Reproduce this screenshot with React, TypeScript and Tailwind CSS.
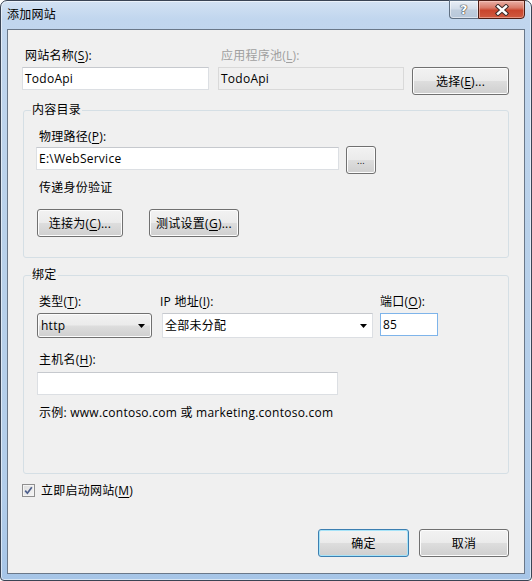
import React from 'react';

const ui = "font-['Open_Sans','Noto_Sans_CJK_SC',sans-serif] text-[12px] leading-[15px] tracking-[0.25px] text-black";

const Mn: React.FC<{ k: string }> = ({ k }) => <u className="underline underline-offset-[2px]">{k}</u>;

interface BtnProps {
    children: React.ReactNode;
    className?: string;
    primary?: boolean;
}

const WinButton: React.FC<BtnProps> = ({ children, className = '', primary = false }) => (
    <button
        className={`h-[28px] shrink-0 rounded-[3px] border ${primary ? 'border-[#3c7fb1] shadow-[inset_0_0_0_1px_#a6e3f8]' : 'border-[#707070] shadow-[inset_0_0_0_1px_#fcfcfc]'} bg-[linear-gradient(180deg,#f2f2f2_0%,#ebebeb_48%,#dddddd_52%,#cfcfcf_100%)] text-center ${className}`}
    >
        {children}
    </button>
);

const TextBox: React.FC<{ value?: string; className?: string; disabled?: boolean; focused?: boolean }> = ({
    value = '',
    className = '',
    disabled = false,
    focused = false,
}) => (
    <div
        className={`flex h-[23px] shrink-0 items-center border px-[2px] ${
            focused
                ? 'border-[#7eb4ea] bg-white'
                : disabled
                  ? 'border-[#d9d9d9] bg-[#f0f0f0]'
                  : 'border-[#dcdfe3] border-t-[#c6c9ce] bg-white'
        } ${className}`}
    >
        {value}
    </div>
);

const Arrow = () => (
    <svg width="7" height="4" viewBox="0 0 7 4" className="shrink-0">
        <path d="M0 0h7L3.5 4z" fill="#000" />
    </svg>
);

export default function App() {
    return (
        <div className={`${ui} flex h-[581px] w-[532px] flex-col rounded-t-[7px] rounded-b-[4px] border border-[#3a4454] bg-[linear-gradient(180deg,#d3e2f3_0%,#c1d6ee_18px,#b9d1ea_40%,#b2cdea_85%,#a6c5e7_100%)] px-[6px] pb-[6px] shadow-[inset_0_0_0_1px_rgba(255,255,255,0.55)]`}>
            {/* title bar */}
            <div className="flex h-[28px] shrink-0 items-start">
                <div className="pt-[6px] text-black">添加网站</div>
                <div className="-mt-px ml-auto flex h-[19px]">
                    <div className="flex w-[29px] items-center justify-center rounded-bl-[4px] border border-r-0 border-[#5f6f82] bg-[linear-gradient(180deg,#e9eff6_0%,#d3dde9_45%,#bfcddd_55%,#b7c7da_100%)] shadow-[inset_0_0_0_1px_rgba(255,255,255,0.5)]">
                        <span className="font-['DejaVu_Sans',sans-serif] text-[13px] font-bold leading-none text-white [text-shadow:0_0_1px_#333,0_0_1px_#333,0_0_1px_#333]">?</span>
                    </div>
                    <div className="flex w-[47px] items-center justify-center rounded-br-[4px] border border-[#4e1d14] bg-[linear-gradient(180deg,#eab0a6_0%,#d87a68_40%,#c9452d_55%,#cf5a40_100%)] shadow-[inset_0_0_0_1px_rgba(255,220,210,0.45)]">
                        <svg width="14" height="12" viewBox="0 0 14 12">
                            <path d="M3 2.5l8 7M11 2.5l-8 7" stroke="#3b2a28" strokeWidth="4.4" strokeLinecap="square" />
                            <path d="M3 2.5l8 7M11 2.5l-8 7" stroke="#fff" strokeWidth="2.4" strokeLinecap="square" />
                        </svg>
                    </div>
                </div>
            </div>

            {/* client area */}
            <div className="flex flex-1 flex-col border border-[#6a7889] bg-[#f0f0f0]">
                {/* site name row */}
                <div className="flex pl-[14px] pr-[15px] pt-[18px]">
                    <div className="flex w-[187px] flex-col">
                        <div className="ml-[3px] h-[19px]">
                            网站名称(<Mn k="S" />):
                        </div>
                        <TextBox value="TodoApi" />
                    </div>
                    <div className="ml-[9px] flex w-[186px] flex-col">
                        <div className="ml-[3px] h-[19px] text-[#a0a0a0]">
                            应用程序池(<Mn k="L" />):
                        </div>
                        <TextBox value="TodoApi" disabled />
                    </div>
                    <div className="ml-auto flex flex-col pt-[19px]">
                        <WinButton className="w-[97px]">
                            选择(<Mn k="E" />)...
                        </WinButton>
                    </div>
                </div>

                {/* content directory */}
                <fieldset className="mx-[15px] mt-[8px] rounded-[3px] border border-[#d5dfe5] p-0">
                    <legend className="ml-[7px] px-[1px] leading-[14px]">内容目录</legend>
                    <div className="flex flex-col pb-[20px] pl-[12px] pt-[12px]">
                        <div className="ml-[3px]">
                            物理路径(<Mn k="P" />):
                        </div>
                        <div className="mt-[2px] flex items-start">
                            <TextBox value="E:\WebService" className="mt-px w-[303px]" />
                            <WinButton className="ml-[7px] w-[30px] text-[9px]">...</WinButton>
                        </div>
                        <div className="ml-[3px] mt-[6px]">传递身份验证</div>
                        <div className="mt-[14px] flex">
                            <WinButton className="ml-px w-[86px]">
                                连接为(<Mn k="C" />)...
                            </WinButton>
                            <WinButton className="ml-[26px] w-[90px]">
                                测试设置(<Mn k="G" />)...
                            </WinButton>
                        </div>
                    </div>
                </fieldset>

                {/* binding */}
                <fieldset className="mx-[15px] mt-[10px] rounded-[3px] border border-[#d5dfe5] p-0">
                    <legend className="ml-[7px] px-[1px] leading-[14px]">绑定</legend>
                    <div className="flex flex-col pb-[53px] pl-[13px] pt-[12px]">
                        <div className="flex">
                            <div className="flex w-[115px] flex-col">
                                <div className="ml-[2px] h-[19px]">
                                    类型(<Mn k="T" />):
                                </div>
                                <div className="flex h-[25px] items-center justify-between rounded-[3px] border border-[#707070] bg-[linear-gradient(180deg,#f2f2f2_0%,#ebebeb_48%,#dddddd_52%,#cfcfcf_100%)] pl-[3px] pr-[6px] shadow-[inset_0_0_0_1px_#fcfcfc]">
                                    <span>http</span>
                                    <Arrow />
                                </div>
                            </div>
                            <div className="ml-[10px] flex w-[211px] flex-col">
                                <div className="-ml-[2px] h-[19px]">
                                    IP 地址(<Mn k="I" />):
                                </div>
                                <div className="flex h-[25px] items-center justify-between border border-[#dcdfe3] border-t-[#c6c9ce] bg-white pl-[2px] pr-[5px]">
                                    <span>全部未分配</span>
                                    <Arrow />
                                </div>
                            </div>
                            <div className="ml-[7px] flex w-[58px] flex-col">
                                <div className="h-[19px]">
                                    端口(<Mn k="O" />):
                                </div>
                                <TextBox value="85" focused />
                            </div>
                        </div>
                        <div className="ml-[2px] mt-[14px] h-[20px]">
                            主机名(<Mn k="H" />):
                        </div>
                        <TextBox className="w-[301px]" />
                        <div className="ml-[2px] mt-[10px]">示例: www.contoso.com 或 marketing.contoso.com</div>
                    </div>
                </fieldset>

                {/* start now */}
                <div className="mt-[9px] flex h-[15px] items-center pl-[14px]">
                    <div className="flex h-[13px] w-[13px] items-center justify-center border border-[#8f8f8f] bg-[linear-gradient(135deg,#dcdcdc_0%,#f6f6f6_100%)] shadow-[inset_0_0_0_1px_#f4f4f4]">
                        <svg width="9" height="9" viewBox="0 0 9 9">
                            <path d="M1.2 4.6l2.2 2.6L7.8 1.2" fill="none" stroke="#4d5f8c" strokeWidth="1.7" />
                        </svg>
                    </div>
                    <span className="ml-[6px]">
                        立即启动网站(<Mn k="M" />)
                    </span>
                </div>

                <div className="flex-1" />

                <div className="flex justify-end gap-[10px] pb-[16px] pr-[15px]">
                    <WinButton primary className="w-[91px]">
                        确定
                    </WinButton>
                    <WinButton className="w-[90px]">取消</WinButton>
                </div>
            </div>
        </div>
    );
}
